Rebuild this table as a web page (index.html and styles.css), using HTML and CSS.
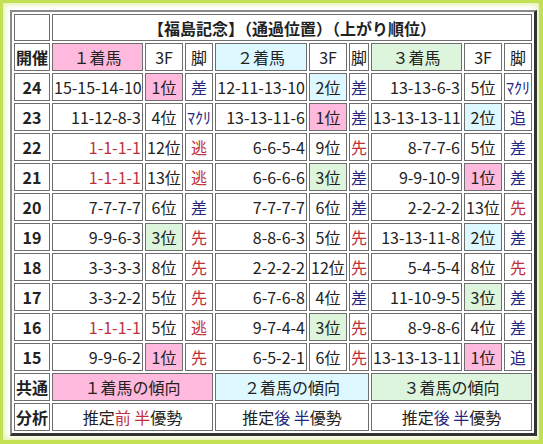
FILE: index.html
```html
<!DOCTYPE html>
<html lang="ja">
<head>
<meta charset="utf-8">
<link rel="stylesheet" href="styles.css">
</head>
<body>
<div class="frame">
<table class="kt">
  <colgroup>
    <col class="w1"><col class="w2"><col class="w3"><col class="w4"><col class="w5"><col class="w6"><col class="w7"><col class="w8"><col class="w9"><col class="w10">
  </colgroup>
  <tr class="title-row">
    <td></td>
    <td colspan="9" class="title">【福島記念】（通過位置）（上がり順位）</td>
  </tr>
  <tr>
    <td class="b">開催</td>
    <td class="pk">１着馬</td><td>3F</td><td>脚</td>
    <td class="bl">２着馬</td><td>3F</td><td>脚</td>
    <td class="gr">３着馬</td><td>3F</td><td>脚</td>
  </tr>
  <tr>
    <td class="b">24</td>
    <td class="r">15-15-14-10</td><td class="pk">1位</td><td class="nv">差</td>
    <td class="r">12-11-13-10</td><td class="bl">2位</td><td class="nv">差</td>
    <td class="r">13-13-6-3</td><td>5位</td><td class="nv">ﾏｸﾘ</td>
  </tr>
  <tr>
    <td class="b">23</td>
    <td class="r">11-12-8-3</td><td>4位</td><td class="nv">ﾏｸﾘ</td>
    <td class="r">13-13-11-6</td><td class="pk">1位</td><td class="nv">差</td>
    <td class="r">13-13-13-11</td><td class="bl">2位</td><td class="nv">追</td>
  </tr>
  <tr>
    <td class="b">22</td>
    <td class="r rd">1-1-1-1</td><td>12位</td><td class="rd">逃</td>
    <td class="r">6-6-5-4</td><td>9位</td><td class="rd">先</td>
    <td class="r">8-7-7-6</td><td>5位</td><td class="nv">差</td>
  </tr>
  <tr>
    <td class="b">21</td>
    <td class="r rd">1-1-1-1</td><td>13位</td><td class="rd">逃</td>
    <td class="r">6-6-6-6</td><td class="gr">3位</td><td class="nv">差</td>
    <td class="r">9-9-10-9</td><td class="pk">1位</td><td class="nv">差</td>
  </tr>
  <tr>
    <td class="b">20</td>
    <td class="r">7-7-7-7</td><td>6位</td><td class="nv">差</td>
    <td class="r">7-7-7-7</td><td>6位</td><td class="nv">差</td>
    <td class="r">2-2-2-2</td><td>13位</td><td class="rd">先</td>
  </tr>
  <tr>
    <td class="b">19</td>
    <td class="r">9-9-6-3</td><td class="gr">3位</td><td class="rd">先</td>
    <td class="r">8-8-6-3</td><td>5位</td><td class="rd">先</td>
    <td class="r">13-13-11-8</td><td class="bl">2位</td><td class="nv">差</td>
  </tr>
  <tr>
    <td class="b">18</td>
    <td class="r">3-3-3-3</td><td>8位</td><td class="rd">先</td>
    <td class="r">2-2-2-2</td><td>12位</td><td class="rd">先</td>
    <td class="r">5-4-5-4</td><td>8位</td><td class="rd">先</td>
  </tr>
  <tr>
    <td class="b">17</td>
    <td class="r">3-3-2-2</td><td>5位</td><td class="rd">先</td>
    <td class="r">6-7-6-8</td><td>4位</td><td class="nv">差</td>
    <td class="r">11-10-9-5</td><td class="gr">3位</td><td class="nv">差</td>
  </tr>
  <tr>
    <td class="b">16</td>
    <td class="r rd">1-1-1-1</td><td>5位</td><td class="rd">逃</td>
    <td class="r">9-7-4-4</td><td class="gr">3位</td><td class="rd">先</td>
    <td class="r">8-9-8-6</td><td>4位</td><td class="nv">差</td>
  </tr>
  <tr>
    <td class="b">15</td>
    <td class="r">9-9-6-2</td><td class="pk">1位</td><td class="rd">先</td>
    <td class="r">6-5-2-1</td><td>6位</td><td class="rd">先</td>
    <td class="r">13-13-13-11</td><td class="pk">1位</td><td class="nv">追</td>
  </tr>
  <tr>
    <td class="b">共通</td>
    <td colspan="3" class="pk">１着馬の傾向</td>
    <td colspan="3" class="bl">２着馬の傾向</td>
    <td colspan="3" class="gr">３着馬の傾向</td>
  </tr>
  <tr>
    <td class="b">分析</td>
    <td colspan="3">推定<span class="rd">前</span> <span class="rd">半</span>優勢</td>
    <td colspan="3">推定<span class="nv">後</span> <span class="nv">半</span>優勢</td>
    <td colspan="3">推定<span class="nv">後</span> <span class="nv">半</span>優勢</td>
  </tr>
</table>
</div>
</body>
</html>
```

FILE: styles.css
```css
html, body {
  margin: 0;
  padding: 0;
  background: #ffffff;
}

.frame {
  width: 543px;
  height: 444px;
  box-sizing: border-box;
  border-style: solid;
  border-color: #c3df52;
  border-width: 3px 4px 4px 3px;
  background: #ffffff;
  box-shadow: inset 0 0 5px 2px #e4f2b0;
  padding: 7px 0 0 7px;
}

.kt {
  width: 527px;
  table-layout: fixed;
  border-collapse: separate;
  border-spacing: 2px;
  border-style: solid;
  border-width: 2px 3px 3px 2px;
  border-color: #8a8a8a #333333 #333333 #8a8a8a;
  font-family: "Noto Sans CJK JP", "Noto Sans", sans-serif;
  font-size: 16px;
  color: #222222;
  background: #ffffff;
}

.w1 { width: 36px; }
.w2 { width: 91px; }
.w3 { width: 38px; }
.w4 { width: 28px; }
.w5 { width: 92px; }
.w6 { width: 38px; }
.w7 { width: 20px; }
.w8 { width: 91px; }
.w9 { width: 38px; }
.w10 { width: 28px; }

.kt td {
  box-sizing: border-box;
  height: 28px;
  padding: 0 1px;
  border: 1px solid #6e6e6e;
  text-align: center;
  vertical-align: middle;
  line-height: 20px;
  white-space: nowrap;
  overflow: hidden;
}

.kt .title-row td {
  height: 27px;
}

.kt td.title {
  font-weight: bold;
}

.kt td.b {
  font-weight: bold;
}

.kt td.r {
  text-align: right;
}

.pk { background: #ffb9dc; }
.bl { background: #ddf8ff; }
.gr { background: #dcf5dc; }

.rd { color: #c0303a; }
.nv { color: #262680; }
```
